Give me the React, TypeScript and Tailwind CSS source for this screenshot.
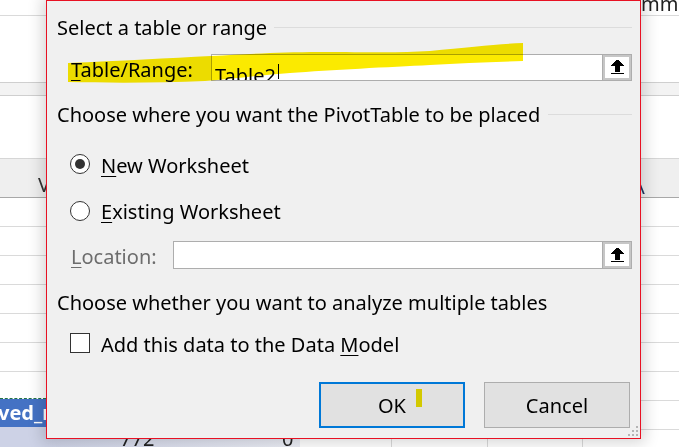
import React from "react";

function UpArrow() {
  return (
    <svg width="13" height="15" viewBox="0 0 13 15" shapeRendering="crispEdges">
      <path d="M5 0H8V1H9V2H10V3H11V4H12V5H13V6H9V12H4V6H0V5H1V4H2V3H3V2H4V1H5Z" fill="#000" />
      <rect x="0" y="13" width="13" height="1" fill="#000" />
    </svg>
  );
}

function RangeInput({ children }: { children?: React.ReactNode }) {
  return (
    <div className="flex flex-1 h-full border border-[#adadad] bg-white">
      <div className="flex-1 overflow-hidden">{children}</div>
      <div className="w-[29px] h-full border-l border-[#adadad]">
        <div className="w-full h-full border-2 border-[#c6c6c6] bg-white flex items-center justify-center">
          <UpArrow />
        </div>
      </div>
    </div>
  );
}

function Radio({ checked }: { checked?: boolean }) {
  return (
    <div className="w-[20px] h-[20px] rounded-full border border-[#333333] bg-white flex items-center justify-center shrink-0">
      {checked && <div className="w-[10px] h-[10px] rounded-full bg-[#333333]" />}
    </div>
  );
}

function U({ children, gray }: { children: React.ReactNode; gray?: boolean }) {
  return (
    <span className={gray ? "underline decoration-1 underline-offset-[3px] decoration-[#6d6d6d]" : "underline decoration-1 underline-offset-[3px]"}>
      {children}
    </span>
  );
}

function SideStrip({ side }: { side: "left" | "right" }) {
  const rows = side === "left" ? 6 : 8;
  return (
    <div className="flex flex-col h-full overflow-hidden bg-white">
      <div className="h-[15px] shrink-0 overflow-hidden">
        {side === "right" && (
          <span className="block -mt-[6px] leading-[20px] text-[20px] text-[#222] whitespace-nowrap">mments</span>
        )}
      </div>
      <div className="h-px shrink-0 bg-[#dadada]" />
      <div className="h-[66px] shrink-0" />
      <div className="h-[14px] shrink-0 border-y border-[#cfcfcf] bg-[#f3f3f3]" />
      <div className="h-[62px] shrink-0" />
      <div className="h-[40px] shrink-0 border-t border-[#d6d6d6] border-b border-b-[#a8a8a8] bg-[#efefef] overflow-hidden">
        {side === "left" ? (
          <span className="block ml-[38px] mt-[12px] leading-[28px] text-[20px] text-[#333]">V</span>
        ) : (
          <span className="block -ml-[9px] mt-[14px] leading-[28px] text-[20px] text-[#203864]">A</span>
        )}
      </div>
      {Array.from({ length: rows }).map((_, i) => (
        <div key={i} className="h-[29px] shrink-0 border-b border-[#dadada]" />
      ))}
      {side === "left" && (
        <>
          <div className="h-[26px] shrink-0" />
          <div className="h-px shrink-0 border-t border-dashed border-[#217346]" />
          <div className="h-[28px] shrink-0 bg-[#4472c4] overflow-hidden">
            <span className="block -ml-[2px] leading-[28px] text-[20px] font-bold text-white whitespace-nowrap">ved_r</span>
          </div>
          <div className="flex-1 bg-[#cdd2e6]" />
        </>
      )}
    </div>
  );
}

export default function App() {
  return (
    <div className="relative w-[679px] h-[447px] overflow-hidden bg-white font-['Noto_Sans',sans-serif]">
      {/* spreadsheet behind */}
      <div className="flex h-full">
        <div className="w-[46px] h-full shrink-0">
          <SideStrip side="left" />
        </div>
        <div className="w-[595px] h-full shrink-0 flex flex-col">
          <div className="h-[439px] shrink-0" />
          <div className="flex-1 flex">
            <div className="w-[254px] bg-gradient-to-r from-[#cdd2e6] to-[#eceef6] relative overflow-hidden">
              <span className="absolute left-[74px] -top-[14px] text-[20px] leading-[28px] text-[#222]">772</span>
              <span className="absolute left-[236px] -top-[14px] text-[20px] leading-[28px] text-[#222]">0</span>
            </div>
            <div className="w-[92px] border-r border-[#dadada]" />
            <div className="w-[96px] border-r border-[#dadada]" />
            <div className="w-[95px] border-r border-[#dadada]" />
            <div className="flex-1" />
          </div>
        </div>
        <div className="flex-1 h-full">
          <SideStrip side="right" />
        </div>
      </div>

      {/* PivotTable dialog */}
      <div className="absolute left-[46px] top-0 w-[595px] h-[439px] border border-[#e81123] bg-[#f0f0f0] shadow-[0_0_14px_4px_rgba(0,0,0,0.16)] text-[20px] leading-[28px] text-black">
        <div className="flex flex-col pl-[10px] pr-[8px]">
          <div className="mt-[12px] h-[28px] flex items-center">
            <span className="relative top-[1px] whitespace-nowrap">Select a table or range</span>
            <div className="flex-1 h-px bg-[#dcdcdc] ml-[7px]" />
          </div>

          <div className="mt-[13px] h-[27px] flex items-center">
            <div className="relative top-[2px] w-[154px] shrink-0 pl-[14px]">
              <U>T</U>able/Range:
            </div>
            <RangeInput>
              <div className="pl-[3px] mt-[7px] whitespace-nowrap flex items-start">
                <span>Table2</span>
                <span className="inline-block w-px h-[15px] bg-black mt-[2px] ml-[2px]" />
              </div>
            </RangeInput>
          </div>

          <div className="mt-[18px] h-[28px] flex items-center">
            <span className="relative top-[2px] whitespace-nowrap">Choose where you want the PivotTable to be placed</span>
            <div className="flex-1 h-px bg-[#dcdcdc] ml-[8px] mt-[2px]" />
          </div>

          <div className="mt-[23px] h-[28px] flex items-center pl-[13px]">
            <Radio checked />
            <span className="relative top-[2px] ml-[11px] whitespace-nowrap">
              <U>N</U>ew Worksheet
            </span>
          </div>

          <div className="mt-[19px] h-[28px] flex items-center pl-[13px]">
            <Radio />
            <span className="relative top-[1px] ml-[11px] whitespace-nowrap">
              <U>E</U>xisting Worksheet
            </span>
          </div>

          <div className="mt-[16px] h-[28px] flex items-center">
            <div className="relative top-[2px] w-[116px] shrink-0 pl-[14px] text-[#6d6d6d]">
              <U gray>L</U>ocation:
            </div>
            <RangeInput />
          </div>

          <div className="mt-[19px] h-[28px] flex items-center">
            <span className="relative top-[1px] whitespace-nowrap">Choose whether you want to analyze multiple tables</span>
          </div>

          <div className="mt-[13px] h-[28px] flex items-center pl-[13px]">
            <div className="w-[20px] h-[20px] border border-[#333333] bg-white shrink-0" />
            <span className="relative top-[2px] ml-[11px] whitespace-nowrap">
              Add this data to the Data <U>M</U>odel
            </span>
          </div>

          <div className="mt-[25px] h-[46px] flex justify-end gap-[19px] mr-[2px]">
            <button className="w-[146px] h-full border-2 border-[#0078d7] bg-[#e1e1e1] flex items-center justify-center">
              <span className="relative top-[1px]">OK</span>
            </button>
            <button className="w-[146px] h-full border border-[#adadad] bg-[#e1e1e1] flex items-center justify-center">
              <span className="relative top-[1px]">Cancel</span>
            </button>
          </div>
        </div>

        <svg className="absolute right-[2px] bottom-[2px]" width="10" height="10" viewBox="0 0 10 10" shapeRendering="crispEdges">
          <rect x="8" y="0" width="2" height="2" fill="#b5b5b5" />
          <rect x="4" y="4" width="2" height="2" fill="#b5b5b5" />
          <rect x="8" y="4" width="2" height="2" fill="#b5b5b5" />
          <rect x="0" y="8" width="2" height="2" fill="#b5b5b5" />
          <rect x="4" y="8" width="2" height="2" fill="#b5b5b5" />
          <rect x="8" y="8" width="2" height="2" fill="#b5b5b5" />
        </svg>
      </div>

      {/* yellow highlighter marks */}
      <svg className="absolute left-0 top-0 pointer-events-none mix-blend-multiply" width="679" height="447" viewBox="0 0 679 447">
        <path
          d="M68,63 C120,61 170,58 211,56 C250,54 280,52 320,52 C370,52 400,53 430,51 C470,47 500,44 523,43 L523,61 C490,62 460,63 430,65 C390,67 330,70 290,73 C260,75 230,79 205,81 C160,83 110,83 68,82 Z"
          fill="#fbea00"
        />
        <rect x="416" y="389" width="6" height="18" fill="#f0e400" />
      </svg>
    </div>
  );
}
